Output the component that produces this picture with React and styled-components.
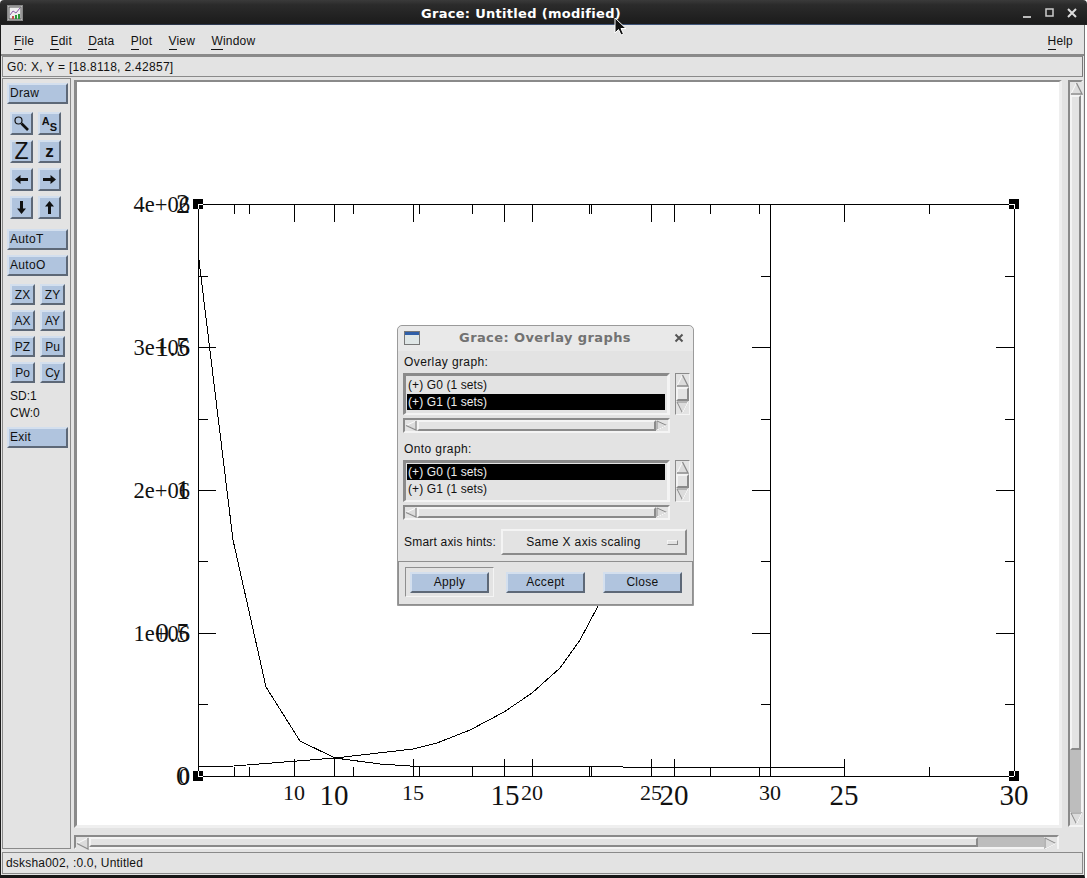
import React from 'react';
import styled, { createGlobalStyle, css } from 'styled-components';

const PANEL = '#e3e3e3';
const LIGHT = '#f4f4f4';
const DARK = '#8a8a8a';
const STEEL = '#b0c4de';

const raised = css`
  border-style: solid;
  border-width: 2px;
  border-color: ${LIGHT} ${DARK} ${DARK} ${LIGHT};
`;
const sunken = css`
  border-style: solid;
  border-width: 2px;
  border-color: ${DARK} ${LIGHT} ${LIGHT} ${DARK};
`;

const Global = createGlobalStyle`
  html, body { margin: 0; padding: 0; background: #fff; overflow: hidden; }
  body { font-family: "Liberation Sans", Arial, sans-serif; font-size: 12px; color: #111; }
  * { box-sizing: border-box; }
`;

const Screen = styled.div`
  position: relative;
  width: 1087px;
  height: 878px;
`;
const TitleBar = styled.header`
  height: 25px;
  display: flex;
  align-items: center;
  padding: 2px 8px 0 7px;
  color: #fff;
  background: linear-gradient(#3a3a3a, #2b2b2b 20%, #1b1b1b);
  border-bottom: 1px solid;
  border-image: linear-gradient(90deg, #222, #34466a 30%, #42587c 70%, #222 98%) 1;
  border-radius: 4px 4px 0 0;
`;
const TitleText = styled.div`
  flex: 1;
  text-align: center;
  font: bold 13px "DejaVu Sans", sans-serif;
  letter-spacing: 0.3px;
  padding-right: 2px;
`;
const WinButtons = styled.div`
  display: flex;
  gap: 8px;
  color: #ddd;
`;
const Body = styled.div`
  width: 1085px;
  height: 853px;
  background: ${PANEL};
  border-left: 1px solid #1c1c1c;
  border-right: 1px solid #777;
  border-bottom: 3px solid #161616;
  display: flex;
  flex-direction: column;
  padding-bottom: 1px;
`;
const MenuBar = styled.nav`
  height: 31px;
  flex: none;
  display: flex;
  align-items: center;
  gap: 16.3px;
  padding: 2px 11px 0 13px;
  border-bottom: 2px solid ${DARK};
`;
const MenuItem = styled.span`
  letter-spacing: 0.2px;
  &:last-child { margin-left: auto; }
`;
const Mnemonic = styled.span`
  border-bottom: 1px solid #111;
  padding-bottom: 1px;
`;
const InfoBar = styled.div`
  height: 21px;
  flex: none;
  margin: 0 1px;
  padding: 0 0 0 4px;
  display: flex;
  align-items: center;
  letter-spacing: 0.3px;
  border: 1px solid ${DARK};
  border-right-color: #777;
`;
const Main = styled.div`
  flex: 1;
  min-height: 0;
  display: flex;
  padding: 1px 0 0 1px;
`;
const Sidebar = styled.aside`
  width: 69px;
  flex: none;
  border: 1px solid ${DARK};
  padding: 4px 0 0 4px;
  display: flex;
  flex-direction: column;
`;
const Btn = styled.button`
  ${raised}
  border-color: #d3dfee #5d6877 #5d6877 #d3dfee;
  background: ${STEEL};
  font: 12px "Liberation Sans", sans-serif;
  color: #111;
  padding: 0;
  display: flex;
  align-items: center;
  justify-content: center;
  overflow: hidden;
`;
const WideBtn = styled(Btn)`
  width: 61px;
  height: 21px;
  justify-content: flex-start;
  padding: 0 0 2px 1px;
  letter-spacing: 0.3px;
  margin-top: ${p => p.$top || 0}px;
`;
const IconGrid = styled.div`
  display: grid;
  grid-template-columns: 23px 23px;
  grid-auto-rows: 23px;
  gap: 5px;
  margin: 8px 0 0 3px;
`;
const IconBtn = styled(Btn)`
  font-weight: ${p => (p.$bold ? 'bold' : 'normal')};
  font-size: ${p => p.$size || 12}px;
`;
const IconLow = styled.span`
  display: inline-block;
  transform: translateY(3px);
`;
const IconHigh = styled.span`
  display: inline-block;
  transform: translateY(-3px);
`;
const TextGrid = styled.div`
  display: grid;
  grid-template-columns: 25px 25px;
  grid-auto-rows: 21px;
  gap: 5px;
  margin: 8px 0 0 3px;
`;
const Info = styled.div`
  height: 17px;
  line-height: 17px;
  padding-left: 3px;
  margin-top: ${p => p.$top || 0}px;
`;
const Center = styled.div`
  width: 1011px;
  margin-left: 1px;
  flex: none;
  display: grid;
  grid-template-columns: 993px 18px;
  grid-template-rows: 757px 14px;
`;
const CanvasFrame = styled.div`
  margin: 2px 0 0 2px;
  width: 988px;
  height: 748px;
  background: #fff;
  border-style: solid;
  border-width: 2px 3px 3px 3px;
  border-color: ${DARK} #efefef #efefef ${DARK};
  overflow: hidden;
`;
const Plot = styled.svg`
  display: block;
  shape-rendering: crispEdges;
  text { shape-rendering: auto; font-family: "Liberation Serif", "Times New Roman", serif; fill: #111; }
`;
const VTrack = styled.div`
  margin: 2px 0 0 3px;
  width: 15px;
  height: 747px;
  background: #bdbdbd;
  ${sunken}
  display: flex;
  flex-direction: column;
`;
const HTrack = styled.div`
  margin-left: 2px;
  width: 985px;
  height: 14px;
  background: #bdbdbd;
  ${sunken}
  display: flex;
`;
const Thumb = styled.div`
  background: ${PANEL};
  ${raised}
  flex: ${p => p.$grow} 0 0;
`;
const Rest = styled.div`
  flex: ${p => p.$grow} 0 0;
`;
const ArrowBox = styled.svg`
  display: block;
  flex: none;
  background: ${PANEL};
`;
const BottomBar = styled.footer`
  height: 22px;
  flex: none;
  margin: 3px 1px 0 1px;
  padding-left: 3px;
  display: flex;
  align-items: center;
  letter-spacing: 0.2px;
  border: 1px solid ${DARK};
`;

const Dialog = styled.section`
  position: absolute;
  left: 397px;
  top: 325px;
  width: 297px;
  height: 281px;
  background: ${PANEL};
  border: 1px solid #9a9a9a;
  border-radius: 5px 5px 0 0;
  display: flex;
  flex-direction: column;
`;
const DialogTitle = styled.div`
  height: 25px;
  flex: none;
  display: flex;
  align-items: center;
  padding: 0 9px 2px 6px;
  background: #e9e9e9;
  border-radius: 5px 5px 0 0;
  font: bold 13px "DejaVu Sans", sans-serif;
  letter-spacing: 0.4px;
  color: #727272;
`;
const DialogTitleText = styled.span`
  flex: 1;
  text-align: center;
  padding-right: 4px;
`;
const DialogBody = styled.div`
  flex: 1;
  padding: 3px 6px 0 5px;
  display: flex;
  flex-direction: column;
`;
const FieldLabel = styled.div`
  height: 17px;
  line-height: 17px;
  letter-spacing: 0.4px;
  margin: ${p => p.$top || 0}px 0 0 1px;
`;
const ListRow = styled.div`
  display: flex;
  gap: 5px;
  margin-top: 2px;
`;
const ListBox = styled.div`
  width: 267px;
  height: 42px;
  padding: 1px;
  flex: none;
  border-style: solid;
  border-width: 3px 3px 2px 3px;
  border-color: ${DARK} ${LIGHT} ${LIGHT} ${DARK};
`;
const ListItem = styled.div`
  height: 16px;
  padding-left: 1px;
  margin-bottom: 1px;
  line-height: 16px;
  letter-spacing: 0.1px;
  width: 258px;
  background: ${p => (p.$on ? '#000' : 'transparent')};
  color: ${p => (p.$on ? '#eee' : '#111')};
`;
const VMini = styled.div`
  width: 15px;
  height: 42px;
  flex: none;
  background: #bdbdbd;
  ${sunken}
  border-width: 1px;
  display: flex;
  flex-direction: column;
`;
const HMini = styled.div`
  width: 267px;
  height: 15px;
  margin-top: 3px;
  background: #bdbdbd;
  ${sunken}
  display: flex;
`;
const HintRow = styled.div`
  display: flex;
  align-items: center;
  justify-content: space-between;
  margin: 9px 0 0 1px;
  letter-spacing: 0.2px;
`;
const OptionBtn = styled.div`
  width: 186px;
  height: 26px;
  ${raised}
  display: flex;
  align-items: center;
  padding: 0 7px 0 0;
  letter-spacing: 0.35px;
`;
const OptionText = styled.span`
  flex: 1;
  text-align: center;
  padding-right: 3px;
`;
const OptionMark = styled.span`
  width: 11px;
  height: 5px;
  background: ${PANEL};
  ${raised}
  border-width: 1px;
`;
const ActionArea = styled.div`
  height: 44px;
  margin-top: 5px;
  padding-bottom: 2px;
  border: 1px solid #8f8f8f;
  display: flex;
  align-items: center;
  flex: none;
`;
const DialogFoot = styled.div`
  padding: 0;
`;
const DefaultRing = styled.div`
  width: 89px;
  height: 30px;
  margin-left: 6px;
  border: 1px solid;
  border-color: #8f8f8f #f4f4f4 #f4f4f4 #8f8f8f;
  display: flex;
  align-items: center;
  justify-content: center;
`;
const ActionBtn = styled(Btn)`
  width: 79px;
  height: 21px;
  margin-left: ${p => p.$left || 0}px;
  padding-bottom: 1px;
  letter-spacing: 0.3px;
`;
const Pointer = styled.svg`
  position: absolute;
  left: 614px;
  top: 17px;
`;

const ArrowGlyph = ({ dir, w = 13, h = 13 }) => {
  const pts = {
    up: `${w / 2},1 ${w - 1},${h - 1} 1,${h - 1}`,
    down: `1,1 ${w - 1},1 ${w / 2},${h - 1}`,
    left: `1,${h / 2} ${w - 1},1 ${w - 1},${h - 1}`,
    right: `1,1 ${w - 1},${h / 2} 1,${h - 1}`
  }[dir];
  const shade = dir === 'up' || dir === 'left' ? ['#fbfbfb', '#8a8a8a'] : ['#8a8a8a', '#fbfbfb'];
  return (
    <ArrowBox width={w} height={h} viewBox={`0 0 ${w} ${h}`}>
      <polygon points={pts} fill="#dcdcdc" stroke={shade[0]} strokeWidth="1" />
      <polyline
        points={
          dir === 'up' ? `${w / 2},1 ${w - 1},${h - 1} 1,${h - 1}`
          : dir === 'left' ? `${w - 1},1 ${w - 1},${h - 1} 1,${h / 2}`
          : dir === 'down' ? `${w / 2},${h - 1} ${w - 1},1`
          : `1,${h - 1} ${w - 1},${h / 2}`
        }
        fill="none"
        stroke={shade[1]}
        strokeWidth="1.3"
      />
    </ArrowBox>
  );
};

const GraceIcon = () => (
  <svg width="16" height="16" viewBox="0 0 16 16">
    <rect x="0.5" y="0.5" width="15" height="15" fill="#d8d8d8" stroke="#888" />
    <rect x="2" y="2" width="12" height="12" fill="#eee" stroke="#555" />
    <path d="M3 10 L6 6 L9 8 L13 3" stroke="#8a5ca8" fill="none" />
    <rect x="8" y="10" width="2" height="4" fill="#2a9a3a" />
    <rect x="11" y="9" width="2" height="5" fill="#2a9a3a" />
    <rect x="5" y="11" width="2" height="3" fill="#c0504d" />
  </svg>
);
const MinIcon = () => (
  <svg width="14" height="14" viewBox="0 0 14 14"><rect x="2" y="10" width="8" height="2" fill="#bbb" /></svg>
);
const MaxIcon = () => (
  <svg width="14" height="14" viewBox="0 0 14 14"><rect x="3" y="3" width="7" height="7" fill="none" stroke="#ccc" strokeWidth="1.5" /></svg>
);
const CloseIcon = () => (
  <svg width="14" height="14" viewBox="0 0 14 14"><path d="M3 3 L11 11 M11 3 L3 11" stroke="#ddd" strokeWidth="2" /></svg>
);
const Lens = () => (
  <svg width="17" height="17" viewBox="0 0 17 17" fill="none" stroke="#111">
    <circle cx="5.5" cy="5.5" r="3.5" strokeWidth="1.2" />
    <path d="M8.5 8.5 L15 15" strokeWidth="2.6" />
  </svg>
);
const Arr = ({ r = 0 }) => (
  <svg width="15" height="15" viewBox="0 0 15 15" style={r ? { transform: `rotate(${r}deg)` } : undefined}>
    <path d="M1 7.5 L6.5 3 V6 H14 V9 H6.5 V12 Z" fill="#111" />
  </svg>
);

const AX = { l: 198.5, r: 1014.5, t: 204.5, b: 776.5, c: 770.5 };
const topLong = [294, 334, 413, 504, 532, 651, 674, 844];
const topShort = [234, 249, 353, 419, 472, 589, 591, 710, 759, 929];
const yShort = [276, 419, 561, 704];
const yLong = [347, 490, 633];
const decay = '198,252 233,540 266,687 300,741 335,758 380,764 410,766 622,766 623,767 844,767';
const rise = '198,767 234,766 335,758 413,749 437,743 470,730 504,712 532,693 560,668 580,640 598,606 640,520';
const yBig = [['2', 204], ['1.5', 347], ['1', 490], ['0.5', 633], ['0', 776]];
const ySmall = [['4e+06', 204], ['3e+06', 347], ['2e+06', 490], ['1e+06', 633], ['0', 776]];
const xSmall = [['10', 294], ['15', 413], ['20', 532], ['25', 651], ['30', 770]];
const xBig = [['10', 334], ['15', 505], ['20', 674], ['25', 844], ['30', 1014]];

const Handle = ({ x, y, sx, sy }) => (
  <g>
    <rect x={x - 5} y={y - 5} width="10" height="10" fill="#000" />
    <rect x={sx > 0 ? x : x - 5} y={y} width="5" height="1" fill="#fff" />
    <rect x={x} y={sy > 0 ? y : y - 5} width="1" height="5" fill="#fff" />
  </g>
);

const Chart = () => (
  <Plot width="982" height="743" viewBox="77 82 982 743">
    <g stroke="#000" strokeWidth="1" fill="none">
      <rect x={AX.l} y={AX.t} width={AX.r - AX.l} height={AX.b - AX.t} />
      <line x1={AX.c} y1={AX.t} x2={AX.c} y2={AX.b} />
      {topLong.map(x => (
        <g key={x}>
          <line x1={x + 0.5} y1="204" x2={x + 0.5} y2="222" />
          <line x1={x + 0.5} y1="759" x2={x + 0.5} y2="776" />
        </g>
      ))}
      {topShort.map(x => (
        <g key={x}>
          <line x1={x + 0.5} y1="204" x2={x + 0.5} y2="214" />
          <line x1={x + 0.5} y1="767" x2={x + 0.5} y2="776" />
        </g>
      ))}
      {yShort.map(y => (
        <g key={y}>
          <line x1="198" y1={y + 0.5} x2="208" y2={y + 0.5} />
          <line x1="761" y1={y + 0.5} x2="770" y2={y + 0.5} />
          <line x1="1005" y1={y + 0.5} x2="1014" y2={y + 0.5} />
        </g>
      ))}
      {yLong.map(y => (
        <g key={y}>
          <line x1="198" y1={y + 0.5} x2="216" y2={y + 0.5} />
          <line x1="752" y1={y + 0.5} x2="770" y2={y + 0.5} />
          <line x1="996" y1={y + 0.5} x2="1014" y2={y + 0.5} />
        </g>
      ))}
      <polyline points={decay} />
      <polyline points={rise} />
    </g>
    <Handle x={198} y={204} sx={1} sy={1} />
    <Handle x={1014} y={204} sx={-1} sy={1} />
    <Handle x={198} y={776} sx={1} sy={-1} />
    <Handle x={1014} y={776} sx={-1} sy={-1} />
    {ySmall.map(([t, y]) => (
      <text key={t} x="190" y={y + 8} fontSize="22.5" textAnchor="end">{t}</text>
    ))}
    {yBig.map(([t, y]) => (
      <text key={t} x="190" y={y + 9} fontSize="28" textAnchor="end">{t}</text>
    ))}
    {xSmall.map(([t, x]) => (
      <text key={t} x={x} y="800" fontSize="22" textAnchor="middle">{t}</text>
    ))}
    {xBig.map(([t, x]) => (
      <text key={t} x={x} y="805" fontSize="29" textAnchor="middle">{t}</text>
    ))}
  </Plot>
);

const M = ({ children }) => (
  <MenuItem><Mnemonic>{children[0]}</Mnemonic>{children.slice(1)}</MenuItem>
);

export default function App() {
  return (
    <Screen>
      <Global />
      <TitleBar>
        <GraceIcon />
        <TitleText>Grace: Untitled (modified)</TitleText>
        <WinButtons><MinIcon /><MaxIcon /><CloseIcon /></WinButtons>
      </TitleBar>
      <Body>
        <MenuBar>
          {['File', 'Edit', 'Data', 'Plot', 'View', 'Window', 'Help'].map(m => <M key={m}>{m}</M>)}
        </MenuBar>
        <InfoBar>G0: X, Y = [18.8118, 2.42857]</InfoBar>
        <Main>
          <Sidebar>
            <WideBtn>Draw</WideBtn>
            <IconGrid>
              <IconBtn><Lens /></IconBtn>
              <IconBtn $bold $size={11}><IconHigh>A</IconHigh><IconLow>S</IconLow></IconBtn>
              <IconBtn $size={23}>Z</IconBtn>
              <IconBtn $bold $size={17}>z</IconBtn>
              <IconBtn><Arr /></IconBtn>
              <IconBtn><Arr r={180} /></IconBtn>
              <IconBtn><Arr r={-90} /></IconBtn>
              <IconBtn><Arr r={90} /></IconBtn>
            </IconGrid>
            <WideBtn $top={10}>AutoT</WideBtn>
            <WideBtn $top={5}>AutoO</WideBtn>
            <TextGrid>
              {['ZX', 'ZY', 'AX', 'AY', 'PZ', 'Pu', 'Po', 'Cy'].map(t => <Btn key={t}>{t}</Btn>)}
            </TextGrid>
            <Info $top={5}>SD:1</Info>
            <Info>CW:0</Info>
            <WideBtn $top={5}>Exit</WideBtn>
          </Sidebar>
          <Center>
            <CanvasFrame><Chart /></CanvasFrame>
            <VTrack>
              <ArrowGlyph dir="up" />
              <Thumb $grow={655} />
              <Rest $grow={62} />
              <ArrowGlyph dir="down" />
            </VTrack>
            <HTrack>
              <ArrowGlyph dir="left" />
              <Thumb $grow={889} />
              <Rest $grow={66} />
              <ArrowGlyph dir="right" />
            </HTrack>
          </Center>
        </Main>
        <BottomBar>dsksha002, :0.0, Untitled</BottomBar>
      </Body>

      <Dialog>
        <DialogTitle>
          <svg width="16" height="14" viewBox="0 0 16 14">
            <rect x="0.5" y="0.5" width="15" height="13" fill="#dfe6e6" stroke="#777" />
            <rect x="1" y="1" width="14" height="3" fill="#2f5fa8" />
          </svg>
          <DialogTitleText>Grace: Overlay graphs</DialogTitleText>
          <svg width="10" height="10" viewBox="0 0 10 10">
            <path d="M1.5 1.5 L8.5 8.5 M8.5 1.5 L1.5 8.5" stroke="#555" strokeWidth="2" />
          </svg>
        </DialogTitle>
        <DialogBody>
          <FieldLabel>Overlay graph:</FieldLabel>
          <ListRow>
            <ListBox>
              <ListItem>(+) G0 (1 sets)</ListItem>
              <ListItem $on>(+) G1 (1 sets)</ListItem>
            </ListBox>
            <VMini>
              <ArrowGlyph dir="up" />
              <Thumb $grow={1} />
              <ArrowGlyph dir="down" />
            </VMini>
          </ListRow>
          <HMini>
            <ArrowGlyph dir="left" w={12} h={11} />
            <Thumb $grow={1} />
            <ArrowGlyph dir="right" w={12} h={11} />
          </HMini>
          <FieldLabel $top={8}>Onto graph:</FieldLabel>
          <ListRow>
            <ListBox>
              <ListItem $on>(+) G0 (1 sets)</ListItem>
              <ListItem>(+) G1 (1 sets)</ListItem>
            </ListBox>
            <VMini>
              <ArrowGlyph dir="up" />
              <Thumb $grow={1} />
              <ArrowGlyph dir="down" />
            </VMini>
          </ListRow>
          <HMini>
            <ArrowGlyph dir="left" w={12} h={11} />
            <Thumb $grow={1} />
            <ArrowGlyph dir="right" w={12} h={11} />
          </HMini>
          <HintRow>
            <span>Smart axis hints:</span>
            <OptionBtn>
              <OptionText>Same X axis scaling</OptionText>
              <OptionMark />
            </OptionBtn>
          </HintRow>
        </DialogBody>
        <DialogFoot>
          <ActionArea>
            <DefaultRing><ActionBtn>Apply</ActionBtn></DefaultRing>
            <ActionBtn $left={12}>Accept</ActionBtn>
            <ActionBtn $left={18}>Close</ActionBtn>
          </ActionArea>
        </DialogFoot>
      </Dialog>

      <Pointer width="13" height="20" viewBox="0 0 13 20">
        <path d="M1 1 L1 16 L4.5 12.5 L7 18 L9.5 17 L7 11.5 L12 11.5 Z" fill="#111" stroke="#fff" strokeWidth="1" />
      </Pointer>
    </Screen>
  );
}
